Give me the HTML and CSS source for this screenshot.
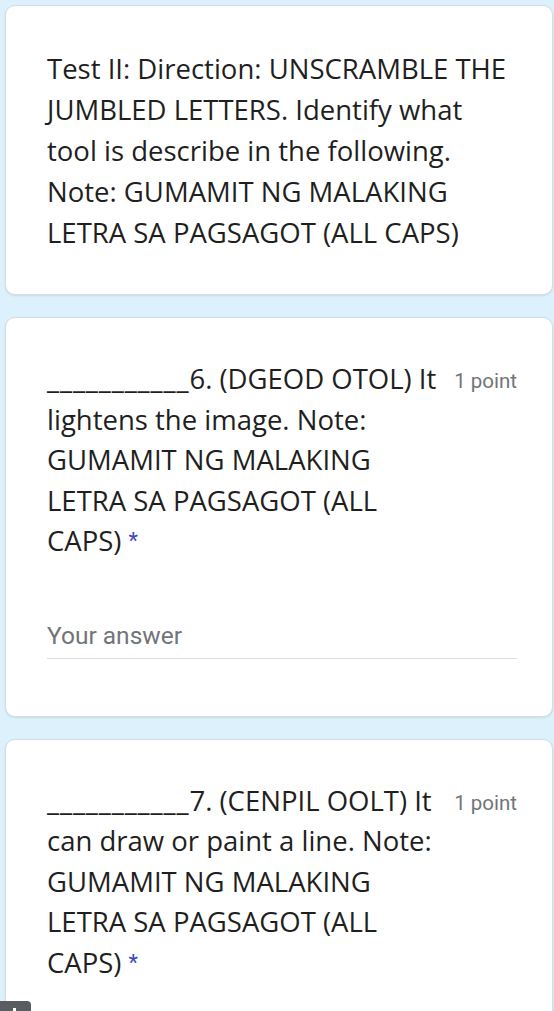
FILE: index.html
```html
<!DOCTYPE html>
<html>
<head>
<meta charset="utf-8">
<link rel="stylesheet" href="styles.css">
</head>
<body>
<main class="page">
  <section class="card header-card">
    <p class="title">Test II: Direction: UNSCRAMBLE THE<br>JUMBLED LETTERS. Identify what<br>tool is describe in the following.<br>Note: GUMAMIT NG MALAKING<br>LETRA SA PAGSAGOT (ALL CAPS)</p>
  </section>
  <section class="card question">
    <div class="q-head">
      <p class="q-text"><span class="blank">___________</span>6. (DGEOD OTOL) It<br>lightens the image. Note:<br>GUMAMIT NG MALAKING<br>LETRA SA PAGSAGOT (ALL<br>CAPS) <span class="req">*</span></p>
      <span class="points">1 point</span>
    </div>
    <div class="answer">Your answer</div>
  </section>
  <section class="card question">
    <div class="q-head">
      <p class="q-text"><span class="blank">___________</span>7. (CENPIL OOLT) It<br>can draw or paint a line. Note:<br>GUMAMIT NG MALAKING<br>LETRA SA PAGSAGOT (ALL<br>CAPS) <span class="req">*</span></p>
      <span class="points">1 point</span>
    </div>
  </section>
</main>
<div class="tab"><span class="tab-mark"></span></div>
</body>
</html>
```
FILE: styles.css
```css
html, body {
  margin: 0;
  padding: 0;
}
body {
  background: #dcf1fb;
  width: 554px;
  height: 1011px;
  overflow: hidden;
  font-family: "Open Sans", "Liberation Sans", sans-serif;
  color: #1f1f1f;
}
.page {
  display: flex;
  flex-direction: column;
  gap: 22px;
  padding: 5px 1px 0 5px;
}
.card {
  background: #fff;
  border: 1px solid #d3dde2;
  border-radius: 10px;
  box-shadow: 0 1px 2px rgba(60, 64, 67, 0.12);
}
.header-card {
  padding: 42px 20px 41px 41px;
}
.title {
  margin: 0;
  font-size: 27.5px;
  line-height: 41px;
  white-space: nowrap;
}
.question {
  padding: 41px 35px 0 41px;
}
.q-head {
  display: flex;
  align-items: flex-start;
  justify-content: space-between;
  gap: 8px;
  padding-bottom: 41px;
}
.q-text {
  margin: 0;
  font-size: 27.5px;
  line-height: 40.5px;
  white-space: nowrap;
}
.blank {
  letter-spacing: 0.9px;
}
.req {
  color: #3c4abf;
  font-family: Roboto, sans-serif;
  font-size: 22px;
  vertical-align: 3px;
}
.points {
  font-family: Roboto, sans-serif;
  font-size: 20.5px;
  line-height: 40.5px;
  padding-top: 2px;
  color: #70757a;
  white-space: nowrap;
}
.answer {
  margin-top: 18px;
  margin-bottom: 57px;
  width: 470px;
  font-family: Roboto, sans-serif;
  font-size: 24.5px;
  line-height: 30px;
  color: #70757a;
  padding-bottom: 7px;
  border-bottom: 1px solid #dadce0;
}
.tab {
  position: fixed;
  left: 0;
  bottom: 0;
  width: 31px;
  height: 10px;
  background: #595c60;
  border-top-right-radius: 4px;
}
.tab-mark {
  position: absolute;
  left: 13px;
  bottom: 0;
  width: 3px;
  height: 3px;
  background: #fff;
}
```
